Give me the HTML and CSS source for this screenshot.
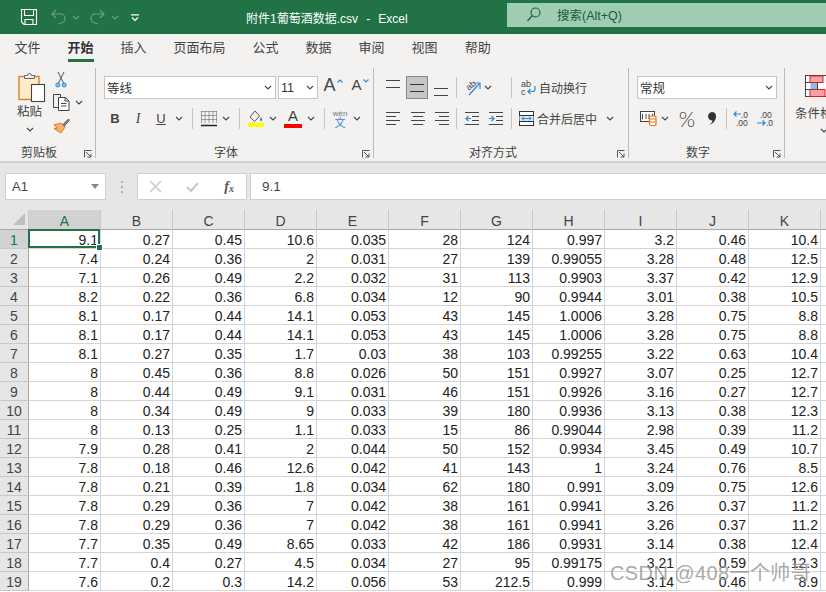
FILE: index.html
```html
<!DOCTYPE html>
<html lang="zh">
<head>
<meta charset="utf-8">
<title>Excel</title>
<link rel="stylesheet" href="styles.css">
</head>
<body>
<svg class="defs" width="0" height="0">
  <symbol id="chev" viewBox="0 0 8 5"><path d="M1 1l3 3 3-3" fill="none" stroke="#444" stroke-width="1.1"/></symbol>
  <symbol id="launch" viewBox="0 0 8 8"><path d="M.5 7.5V.5h7M2 2l5 5M7 3.5V7H3.5" fill="none" stroke="#555" stroke-width="1"/></symbol>
</svg>
<div class="app">
  <header class="titlebar">
    <div class="qat">
      <svg class="save" width="16" height="16" viewBox="0 0 16 16"><path d="M.5.5h15v15H3l-2.500-2.500z M3.500.5v6h9v-6 M4 15.500v-5h8v5" fill="none" stroke="#fff" stroke-width="1.100"/></svg>
      <svg class="undo" width="15" height="16" viewBox="0 0 15 16"><path d="M5 1L1 5l4 4M1 5h8a4.500 4.500 0 0 1 1 9l-3 1" fill="none" stroke="#6a9f85" stroke-width="1.200"/></svg>
      <svg class="tchev" width="8" height="5" viewBox="0 0 8 5"><path d="M1 1l3 3 3-3" fill="none" stroke="#6a9f85" stroke-width="1.100"/></svg>
      <svg class="redo" width="15" height="16" viewBox="0 0 15 16"><path d="M10 1l4 4-4 4M14 5H6a4.500 4.500 0 0 0-1 9l3 1" fill="none" stroke="#6a9f85" stroke-width="1.200"/></svg>
      <svg class="tchev" width="8" height="5" viewBox="0 0 8 5"><path d="M1 1l3 3 3-3" fill="none" stroke="#6a9f85" stroke-width="1.100"/></svg>
      <svg class="custom" width="8" height="7" viewBox="0 0 8 7"><path d="M0 .8h8M1 3.500l3 3 3-3" fill="none" stroke="#fff" stroke-width="1.200"/></svg>
    </div>
    <div class="doc-title">附件1葡萄酒数据.csv &nbsp;-&nbsp; Excel</div>
    <div class="search">
      <svg width="14" height="15" viewBox="0 0 14 15"><circle cx="8.500" cy="5.500" r="4.500" fill="none" stroke="#1f5f3f" stroke-width="1.100"/><path d="M5 9l-4.500 5" stroke="#1f5f3f" stroke-width="1.300"/></svg>
      <span>搜索(Alt+Q)</span>
    </div>
  </header>

  <nav class="tabs">
    <span>文件</span><span class="on">开始</span><span>插入</span><span>页面布局</span><span>公式</span><span>数据</span><span>审阅</span><span>视图</span><span>帮助</span>
  </nav>

  <section class="ribbon">
    <div class="group g-clip">
      <div class="clip-body">
        <div class="paste">
          <svg width="28" height="30" viewBox="0 0 28 30">
            <rect x="1" y="4.500" width="20" height="23" fill="#fdeccb" stroke="#d9781e" stroke-width="1.300"/>
            <path d="M6.500 6.500V3.500h3a2 2 0 0 1 4 0h3v3z" fill="#f3f2f1" stroke="#666"/>
            <rect x="13.500" y="12.500" width="13" height="17" fill="#fff" stroke="#444" stroke-width="1.100"/>
          </svg>
          <span class="paste-t">粘贴</span>
          <svg class="pchev" width="8" height="5"><use href="#chev"/></svg>
        </div>
        <div class="clip-tools">
          <div class="ct ct-cut"><svg width="12" height="17" viewBox="0 0 12 17"><path d="M3 1l5.500 11M9 1L3.500 12" stroke="#555" fill="none"/><circle cx="2.800" cy="14" r="2" fill="#8fc4ec" stroke="#2b88d8"/><circle cx="9.200" cy="14" r="2" fill="#8fc4ec" stroke="#2b88d8"/></svg></div>
          <div class="ct ct-copy"><svg width="17" height="17" viewBox="0 0 17 17"><path d="M6 13.500H.5V.5h7v3" fill="none" stroke="#444"/><path d="M5.500 3.500h7l3.500 3.500v9.500H5.500z M12 3.500V7h4M8 9.500h5.500M8 12h5.500" fill="#fff" stroke="#444"/></svg><svg class="cchev" width="8" height="5"><use href="#chev"/></svg></div>
          <div class="ct"><svg width="17" height="16" viewBox="0 0 17 16"><path d="M8 5l4 4-4 6-7-4.500 3.500-.5L1 7z" fill="#f6b26b" stroke="#e5771e"/><path d="M9.500 7l6-6 1 1-5.500 6.500" fill="#888" stroke="#555"/></svg></div>
        </div>
      </div>
      <div class="glabel gl-clip"><span>剪贴板</span><svg width="8" height="8"><use href="#launch"/></svg></div>
    </div>

    <div class="group g-font">
      <div class="row">
        <div class="select sel-font"><span>等线</span><svg width="8" height="5"><use href="#chev"/></svg></div>
        <div class="select sel-size"><span>11</span><svg width="8" height="5"><use href="#chev"/></svg></div>
        <div class="cell w30 grow-a"><b class="bigA">A</b><svg class="up" width="6" height="4" viewBox="0 0 6 4"><path d="M.5 3.500L3 1l2.500 2.500" fill="none" stroke="#2b88d8" stroke-width="1.100"/></svg></div>
        <div class="cell w24 grow-a"><b class="smallA">A</b><svg class="up" width="6" height="4" viewBox="0 0 6 4"><path d="M.5.5L3 3 5.500.5" fill="none" stroke="#2b88d8" stroke-width="1.100"/></svg></div>
      </div>
      <div class="row row2">
        <div class="cell w22"><b class="fB">B</b></div>
        <div class="cell w24"><i class="fI">I</i></div>
        <div class="cell w22"><u class="fU">U</u></div>
        <div class="cell w14"><svg width="8" height="5"><use href="#chev"/></svg></div>
        <div class="cell w12"><span class="vsep"></span></div>
        <div class="cell w21"><svg width="16" height="16" viewBox="0 0 16 16"><path d="M.5.500h15M.5 4.500h15M.5 8.500h15M.5.500v12M4 .5v12M8 .5v12M12 .5v12M15.500.5v12" fill="none" stroke="#555" stroke-dasharray="1 1"/><path d="M0 14.500h16" stroke="#222" stroke-width="1.500"/></svg></div>
        <div class="cell w14"><svg width="8" height="5"><use href="#chev"/></svg></div>
        <div class="cell w12"><span class="vsep"></span></div>
        <div class="cell w21"><svg width="16" height="17" viewBox="0 0 16 17"><path d="M7 1L2 7l4.500 4.500L11.500 6z" fill="none" stroke="#555"/><path d="M13 7c1.500 2 1.500 4 0 4s-1.500-2 0-4z" fill="#2b88d8"/><rect y="13" width="16" height="4" fill="#ffff00"/></svg></div>
        <div class="cell w14"><svg width="8" height="5"><use href="#chev"/></svg></div>
        <div class="cell w26"><span class="colorA">A</span></div>
        <div class="cell w10"><svg width="8" height="5"><use href="#chev"/></svg></div>
        <div class="cell w16"><span class="vsep"></span></div>
        <div class="cell w16"><span class="wen"><em>wén</em><strong>文</strong></span></div>
        <div class="cell w18"><svg width="8" height="5"><use href="#chev"/></svg></div>
      </div>
      <div class="glabel gl-font"><span>字体</span><svg width="8" height="8"><use href="#launch"/></svg></div>
    </div>

    <div class="group g-align">
      <div class="row">
        <div class="cell lines"><svg width="14" height="8" viewBox="0 0 14 8"><path d="M0 .5h14M0 7.500h14" stroke="#444"/></svg></div>
        <div class="cell w22 active"><svg width="14" height="8" viewBox="0 0 14 8"><path d="M0 .5h14M0 7.500h14" stroke="#333"/></svg></div>
        <div class="cell w26 linesb"><svg width="14" height="8" viewBox="0 0 14 8"><path d="M0 .5h14M0 7.500h14" stroke="#444"/></svg></div>
        <div class="cell w4"><span class="vsep"></span></div>
        <div class="cell w28"><svg width="17" height="16" viewBox="0 0 17 16"><text x="2" y="9" class="abtxt" transform="rotate(-40 6 6)">ab</text><path d="M5 15L15 4M10 3h6v6" fill="none" stroke="#2b88d8" stroke-width="1.200"/></svg></div>
        <div class="cell w4"><svg width="8" height="5"><use href="#chev"/></svg></div>
        <div class="cell sep-gap"><span class="vsep"></span></div>
        <div class="textbtn"><svg width="15" height="16" viewBox="0 0 15 16"><text x="0" y="7" class="abtxt">ab</text><text x="0" y="15" class="abtxt">c</text><path d="M14 6v3a2.500 2.500 0 0 1-2.500 2.500H7M9.500 9L7 11.500 9.500 14" fill="none" stroke="#2b88d8" stroke-width="1.200"/></svg><span>自动换行</span></div>
      </div>
      <div class="row row2">
        <div class="cell lines-first"><svg width="14" height="14" viewBox="0 0 14 14"><path d="M0 .5h14M0 4.500h10M0 8.500h14M0 12.500h10" stroke="#444"/></svg></div>
        <div class="cell w24"><svg width="14" height="14" viewBox="0 0 14 14"><path d="M0 .5h14M2 4.500h10M0 8.500h14M2 12.500h10" stroke="#444"/></svg></div>
        <div class="cell w24"><svg width="14" height="14" viewBox="0 0 14 14"><path d="M0 .5h14M4 4.500h10M0 8.500h14M4 12.500h10" stroke="#444"/></svg></div>
        <div class="cell w4"><span class="vsep"></span></div>
        <div class="cell w28"><svg width="14" height="14" viewBox="0 0 14 14"><path d="M0 .5h14M7 4.500h7M7 8.500h7M0 12.500h14" stroke="#444"/><path d="M6 6.500H1M3.500 4L1 6.500 3.500 9" fill="none" stroke="#2b88d8" stroke-width="1.200"/></svg></div>
        <div class="cell w20"><svg width="14" height="14" viewBox="0 0 14 14"><path d="M0 .5h14M7 4.500h7M7 8.500h7M0 12.500h14" stroke="#444"/><path d="M0 6.500h5M2.500 4L5 6.500 2.500 9" fill="none" stroke="#2b88d8" stroke-width="1.200"/></svg></div>
        <div class="cell w10"><span class="vsep"></span></div>
        <div class="textbtn tb-merge"><svg width="15" height="15" viewBox="0 0 15 15"><rect x=".5" y=".5" width="14" height="14" fill="#fff" stroke="#333"/><rect x=".5" y="4.500" width="14" height="6" fill="#d6e9f8"/><path d="M0 4.500h15M0 10.500h15" stroke="#333"/><path d="M3 7.500h9M5 5.500l-2 2 2 2M10 5.500l2 2-2 2" fill="none" stroke="#2b88d8"/></svg><span>合并后居中</span><svg class="mchev" width="8" height="5"><use href="#chev"/></svg></div>
      </div>
      <div class="glabel gl-align"><span>对齐方式</span><svg width="8" height="8"><use href="#launch"/></svg></div>
    </div>

    <div class="group g-num">
      <div class="row"><div class="select sel-num"><span>常规</span><svg width="8" height="5"><use href="#chev"/></svg></div></div>
      <div class="row row2">
        <div class="cell w23"><svg width="17" height="15" viewBox="0 0 17 15"><rect x=".5" y=".5" width="14" height="10" fill="#fff" stroke="#444"/><path d="M3 3H2.500v5H3M12 3h.5v5H12M6 3v5M9 3v5" stroke="#444" fill="none"/><rect x="9.500" y="5" width="6.500" height="9.500" rx="1.500" fill="#fff" stroke="#e5771e" stroke-width="1.200"/><path d="M10 8h6M10 11h6" stroke="#e5771e"/></svg></div>
        <div class="cell w10"><svg width="8" height="5"><use href="#chev"/></svg></div>
        <div class="cell w34"><span class="pct">%</span></div>
        <div class="cell w16"><svg width="8" height="13" viewBox="0 0 8 13"><path d="M4 0a4 4 0 0 1 4 4.500C8 8.500 5 11.500 1.500 13 3.500 11 4.500 9.500 4.500 8.500A4 4 0 1 1 4 0z" fill="#333"/></svg></div>
        <div class="cell w12"><span class="vsep"></span></div>
        <div class="cell w20"><svg width="18" height="16" viewBox="0 0 18 16"><text x="8" y="7" class="dec">.0</text><text x="3" y="15" class="dec">.00</text><path d="M8 3H1M3.500.5L1 3l2.500 2.500" fill="none" stroke="#2b88d8" stroke-width="1.200"/></svg></div>
        <div class="cell w27"><svg width="18" height="16" viewBox="0 0 18 16"><text x="3" y="7" class="dec">.00</text><text x="9" y="15" class="dec">.0</text><path d="M0 12h8M5.500 9.500L8 12l-2.500 2.500" fill="none" stroke="#2b88d8" stroke-width="1.200"/></svg></div>
      </div>
      <div class="glabel gl-num"><span>数字</span><svg width="8" height="8"><use href="#launch"/></svg></div>
    </div>

    <div class="group g-style">
      <svg class="cf" width="30" height="22" viewBox="0 0 30 22"><rect x=".5" y=".5" width="29" height="21" fill="#fff" stroke="#444"/><rect x="5" y="1" width="13" height="6.500" fill="#f9a0a5" stroke="#e02020"/><rect x="5.500" y="8" width="7" height="6" fill="#82bdee"/><rect x="5" y="14.500" width="15" height="7" fill="#f9a0a5" stroke="#e02020"/><path d="M0 7.500h5M0 14.500h5M12.500 7.500v7" stroke="#444"/></svg>
      <span class="cf-t">条件格式</span>
      <svg class="cf-c" width="8" height="5"><use href="#chev"/></svg>
    </div>
  </section>

  <section class="fbar">
    <div class="namebox"><span>A1</span><svg width="8" height="5" viewBox="0 0 8 5"><path d="M0 0h8L4 5z" fill="#8a8a8a"/></svg></div>
    <div class="fdots"><i></i><i></i><i></i></div>
    <div class="fbtns">
      <svg width="11" height="11" viewBox="0 0 11 11"><path d="M0 0l11 11M11 0L0 11" stroke="#c8c8c8" stroke-width="1.500"/></svg>
      <svg width="13" height="10" viewBox="0 0 13 10"><path d="M1 5l4 4 7-8" fill="none" stroke="#c8c8c8" stroke-width="2"/></svg>
      <span class="fx">f<sub>x</sub></span>
    </div>
    <div class="finput">9.1</div>
  </section>

  <table class="sheet">
    <colgroup><col class="c-h"><col class="c"><col class="c"><col class="c"><col class="c"><col class="c"><col class="c"><col class="c"><col class="c"><col class="c"><col class="c"><col class="c"></colgroup>
    <thead>
      <tr><th class="corner"><svg width="12" height="12" viewBox="0 0 12 12"><path d="M12 0v12H0z" fill="#c0c0c0"/></svg></th><th class="sel">A</th><th>B</th><th>C</th><th>D</th><th>E</th><th>F</th><th>G</th><th>H</th><th>I</th><th>J</th><th>K</th><th></th></tr>
    </thead>
    <tbody>
      <tr><th class="sel">1</th><td class="cur">9.1<span class="handle"></span></td><td>0.27</td><td>0.45</td><td>10.6</td><td>0.035</td><td>28</td><td>124</td><td>0.997</td><td>3.2</td><td>0.46</td><td>10.4</td><td></td></tr>
      <tr><th>2</th><td>7.4</td><td>0.24</td><td>0.36</td><td>2</td><td>0.031</td><td>27</td><td>139</td><td>0.99055</td><td>3.28</td><td>0.48</td><td>12.5</td><td></td></tr>
      <tr><th>3</th><td>7.1</td><td>0.26</td><td>0.49</td><td>2.2</td><td>0.032</td><td>31</td><td>113</td><td>0.9903</td><td>3.37</td><td>0.42</td><td>12.9</td><td></td></tr>
      <tr><th>4</th><td>8.2</td><td>0.22</td><td>0.36</td><td>6.8</td><td>0.034</td><td>12</td><td>90</td><td>0.9944</td><td>3.01</td><td>0.38</td><td>10.5</td><td></td></tr>
      <tr><th>5</th><td>8.1</td><td>0.17</td><td>0.44</td><td>14.1</td><td>0.053</td><td>43</td><td>145</td><td>1.0006</td><td>3.28</td><td>0.75</td><td>8.8</td><td></td></tr>
      <tr><th>6</th><td>8.1</td><td>0.17</td><td>0.44</td><td>14.1</td><td>0.053</td><td>43</td><td>145</td><td>1.0006</td><td>3.28</td><td>0.75</td><td>8.8</td><td></td></tr>
      <tr><th>7</th><td>8.1</td><td>0.27</td><td>0.35</td><td>1.7</td><td>0.03</td><td>38</td><td>103</td><td>0.99255</td><td>3.22</td><td>0.63</td><td>10.4</td><td></td></tr>
      <tr><th>8</th><td>8</td><td>0.45</td><td>0.36</td><td>8.8</td><td>0.026</td><td>50</td><td>151</td><td>0.9927</td><td>3.07</td><td>0.25</td><td>12.7</td><td></td></tr>
      <tr><th>9</th><td>8</td><td>0.44</td><td>0.49</td><td>9.1</td><td>0.031</td><td>46</td><td>151</td><td>0.9926</td><td>3.16</td><td>0.27</td><td>12.7</td><td></td></tr>
      <tr><th>10</th><td>8</td><td>0.34</td><td>0.49</td><td>9</td><td>0.033</td><td>39</td><td>180</td><td>0.9936</td><td>3.13</td><td>0.38</td><td>12.3</td><td></td></tr>
      <tr><th>11</th><td>8</td><td>0.13</td><td>0.25</td><td>1.1</td><td>0.033</td><td>15</td><td>86</td><td>0.99044</td><td>2.98</td><td>0.39</td><td>11.2</td><td></td></tr>
      <tr><th>12</th><td>7.9</td><td>0.28</td><td>0.41</td><td>2</td><td>0.044</td><td>50</td><td>152</td><td>0.9934</td><td>3.45</td><td>0.49</td><td>10.7</td><td></td></tr>
      <tr><th>13</th><td>7.8</td><td>0.18</td><td>0.46</td><td>12.6</td><td>0.042</td><td>41</td><td>143</td><td>1</td><td>3.24</td><td>0.76</td><td>8.5</td><td></td></tr>
      <tr><th>14</th><td>7.8</td><td>0.21</td><td>0.39</td><td>1.8</td><td>0.034</td><td>62</td><td>180</td><td>0.991</td><td>3.09</td><td>0.75</td><td>12.6</td><td></td></tr>
      <tr><th>15</th><td>7.8</td><td>0.29</td><td>0.36</td><td>7</td><td>0.042</td><td>38</td><td>161</td><td>0.9941</td><td>3.26</td><td>0.37</td><td>11.2</td><td></td></tr>
      <tr><th>16</th><td>7.8</td><td>0.29</td><td>0.36</td><td>7</td><td>0.042</td><td>38</td><td>161</td><td>0.9941</td><td>3.26</td><td>0.37</td><td>11.2</td><td></td></tr>
      <tr><th>17</th><td>7.7</td><td>0.35</td><td>0.49</td><td>8.65</td><td>0.033</td><td>42</td><td>186</td><td>0.9931</td><td>3.14</td><td>0.38</td><td>12.4</td><td></td></tr>
      <tr><th>18</th><td>7.7</td><td>0.4</td><td>0.27</td><td>4.5</td><td>0.034</td><td>27</td><td>95</td><td>0.99175</td><td>3.21</td><td>0.59</td><td>12.3</td><td></td></tr>
      <tr><th>19</th><td>7.6</td><td>0.2</td><td>0.3</td><td>14.2</td><td>0.056</td><td>53</td><td>212.5</td><td>0.999</td><td>3.14</td><td>0.46</td><td>8.9</td><td></td></tr>
    </tbody>
  </table>
  <div class="watermark">CSDN @408一个帅哥</div>
</div>
</body>
</html>
```

FILE: styles.css
```css
* { box-sizing: border-box; }
html, body { margin: 0; padding: 0; height: 100%; overflow: hidden; background: #fff; }
body { font-family: "Liberation Sans", "Noto Sans CJK SC", sans-serif; color: #333; }
.defs { position: absolute; }
.app { width: 826px; height: 592px; overflow: hidden; position: relative; }
svg { overflow: visible; }

/* title bar */
.titlebar { height: 34px; background: #217346; display: flex; align-items: center; color: #fff; }
.qat { display: flex; align-items: center; width: 246px; padding-left: 21px; flex: none; }
.undo { margin-left: 14px; }
.redo { margin-left: 10px; }
.tchev { margin-left: 6px; }
.custom { margin-left: 12px; }
.doc-title { width: 261px; flex: none; font-size: 12px; word-spacing: .75px; white-space: nowrap; }
.search { flex: 1; height: 24px; margin-top: -5px; background: #9fcdb3; display: flex; align-items: center; padding-left: 20px; color: #1b5a38; font-size: 12.500px; }
.search span { margin-left: 16px; }

/* tabs */
.tabs { height: 28px; background: #f3f2f1; display: flex; gap: 27px; padding-left: 14.500px; font-size: 13px; line-height: 28px; color: #444; }
.tabs span { height: 28px; }
.tabs .on { font-weight: 700; color: #333; border-bottom: 3px solid #217346; }

/* ribbon */
.ribbon { height: 101px; padding-top: 6px; background: #f3f2f1; border-bottom: 2px solid #d2d0ce; display: flex; overflow: hidden; }
.group { height: 90px; padding-top: 8px; border-right: 1px solid #bdbbb9; flex: none; display: flex; flex-direction: column; }
.g-clip { width: 96px; padding-top: 2px; }
.g-font { width: 278px; padding-left: 8px; }
.g-align { width: 255px; padding-left: 0; }
.g-num { width: 156px; padding-left: 8px; }
.g-style { flex: 1; border-right: 0; position: relative; padding: 7px 0 0 20px; align-items: flex-start; white-space: nowrap; }

.row { display: flex; height: 23px; align-items: center; }
.row2 { margin-top: 8px; }
.cell { height: 23px; display: flex; align-items: center; justify-content: center; flex: none; }
.w4 { width: 4px; } .w10 { width: 10px; } .w12 { width: 12px; } .w14 { width: 14px; } .w16 { width: 16px; }
.w18 { width: 18px; } .w20 { width: 20px; } .w21 { width: 21px; } .w22 { width: 22px; } .w23 { width: 23px; }
.w24 { width: 24px; } .w26 { width: 26px; } .w27 { width: 27px; } .w28 { width: 28px; } .w30 { width: 30px; }
.w34 { width: 34px; }
.vsep { width: 1px; height: 21px; background: #c8c6c4; flex: none; }
.sep-gap { width: 31px; padding-left: 21px; justify-content: flex-start; }

.glabel { margin-top: auto; height: 12px; display: flex; justify-content: space-between; align-items: center; font-size: 12px; color: #444; padding-right: 3px; }
.glabel span { margin-top: -2px; }
.glabel svg { align-self: flex-end; }
.gl-clip { padding-left: 21px; }
.gl-font { padding-left: 110px; }
.gl-align { padding-left: 95px; }
.gl-num { padding-left: 49px; }

.clip-body { display: flex; height: 70px; }
.paste { width: 53px; padding-left: 18px; padding-top: 2px; display: flex; flex-direction: column; align-items: flex-start; }
.paste-t { font-size: 12.500px; margin-top: 2px; line-height: 17px; color: #444; margin-left: -1px; }
.pchev { margin: 6px 0 0 8px; }
.clip-tools { display: flex; flex-direction: column; gap: 6px; padding-top: 1px; }
.ct { display: flex; align-items: center; height: 17px; }
.ct-cut { padding-left: 2px; }
.cchev { margin-left: 5px; }

.select { height: 23px; background: #fff; border: 1px solid #c8c6c4; display: flex; align-items: center; justify-content: space-between; padding: 0 3px 0 2px; font-size: 12.500px; flex: none; }
.sel-font { width: 172px; }
.sel-size { width: 40px; margin-left: 2px; }
.sel-num { width: 140px; }
.bigA { font-weight: 400; font-size: 18px; line-height: 18px; color: #444; }
.smallA { font-weight: 400; font-size: 15px; line-height: 18px; color: #444; }
.grow-a { align-items: flex-start; padding-top: 0; }
.up { margin-top: 3px; margin-left: 1px; }
.fB { font-size: 13px; color: #444; }
.fI { font-family: "Liberation Serif", serif; font-size: 14px; color: #444; }
.fU { font-size: 13px; color: #444; }
.colorA { font-size: 15px; line-height: 16px; color: #444; border-bottom: 4px solid #f00; padding: 0 3.500px; margin-top: -1px; }
.wen { display: flex; flex-direction: column; align-items: center; line-height: 9px; }
.wen em { font-style: normal; font-size: 8px; color: #777; }
.wen strong { font-weight: 400; font-size: 11px; line-height: 11px; color: #2b88d8; }
.abtxt { font-family: "Liberation Sans", sans-serif; font-size: 9px; fill: #444; }
.dec { font-family: "Liberation Sans", sans-serif; font-size: 8.500px; fill: #444; }
.pct { font-family: Lato, sans-serif; font-weight: 300; font-size: 21px; color: #444; }
.active { background: #c8c6c4; border: 1px solid #8a8886; }
.lines { width: 32px; justify-content: flex-start; padding-left: 12px; align-items: flex-start; padding-top: 4px; }
.lines-first { width: 32px; justify-content: flex-start; padding-left: 12px; }
.linesb { align-items: flex-end; padding-bottom: 3px; }
.textbtn { display: flex; align-items: center; font-size: 12px; color: #444; gap: 3px; flex: none; }
.tb-merge { margin-left: 3px; }
.mchev { margin-left: 6px; }

.cf-t { font-size: 12.500px; color: #444; margin: 6px 0 0 -10px; }
.cf-c { margin: 6px 0 0 15px; }

/* formula bar */
.fbar { height: 47px; background: #e6e6e6; display: flex; align-items: center; padding: 0 0 0 5px; }
.namebox { width: 101px; height: 27px; background: #fff; border: 1px solid #cfcfcf; display: flex; justify-content: space-between; align-items: center; padding: 0 6px; font-size: 13px; color: #444; }
.fdots { width: 31px; display: flex; flex-direction: column; align-items: center; gap: 3px; }
.fdots i { width: 2px; height: 2px; background: #b0b0b0; }
.fbtns { width: 110px; height: 27px; background: #fff; border: 1px solid #cfcfcf; display: flex; align-items: center; justify-content: space-between; padding: 0 12px; }
.fx { font-family: "Liberation Serif", serif; font-style: italic; font-weight: 700; font-size: 14px; color: #555; line-height: 14px; }
.fx sub { font-size: 10px; vertical-align: -1px; line-height: 0; }
.finput { flex: 1; height: 27px; margin-left: 3px; background: #fff; border: 1px solid #cfcfcf; border-right: 0; padding-left: 11px; line-height: 25px; font-size: 13.500px; color: #444; }

/* sheet */
.sheet { border-collapse: separate; border-spacing: 0; table-layout: fixed; width: 893px; font-size: 14px; }
.c-h { width: 29px; }
.c { width: 72px; }
thead th { height: 20px; background: #e6e6e6; border-right: 1px solid #c8c8c8; border-bottom: 1px solid #a8a8a8; font-weight: 400; font-size: 14px; color: #444; padding: 3px 0 0; line-height: 16px; }
tbody tr { height: 19px; }
tbody th { background: #e6e6e6; border-right: 1px solid #a8a8a8; border-bottom: 1px solid #c8c8c8; font-weight: 400; font-size: 14px; color: #444; padding: 2px 0 0; line-height: 16px; }
td { border-right: 1px solid #d4d4d4; border-bottom: 1px solid #d4d4d4; text-align: right; padding: 2px 2px 0 0; line-height: 16px; color: #222; white-space: nowrap; overflow: hidden; }
th.corner { text-align: right; padding: 3px 3px 0 0; line-height: 0; vertical-align: top; }
thead th.sel { background: #d2d2d2; color: #217346; }
tbody th.sel { background: #d2d2d2; color: #217346; }
td.cur { position: relative; overflow: visible; }
td.cur::before { content: ""; position: absolute; left: -1px; right: 0; top: -1px; bottom: 0; border: 2px solid #217346; }
.handle { position: absolute; right: -2px; bottom: -2px; width: 5px; height: 5px; background: #217346; outline: 1px solid #fff; }

.watermark { position: absolute; left: 610px; top: 557px; font-size: 20px; letter-spacing: .4px; color: rgba(120,120,120,.65); text-shadow: 0 0 2px rgba(255,255,255,.6); white-space: nowrap; }
```
